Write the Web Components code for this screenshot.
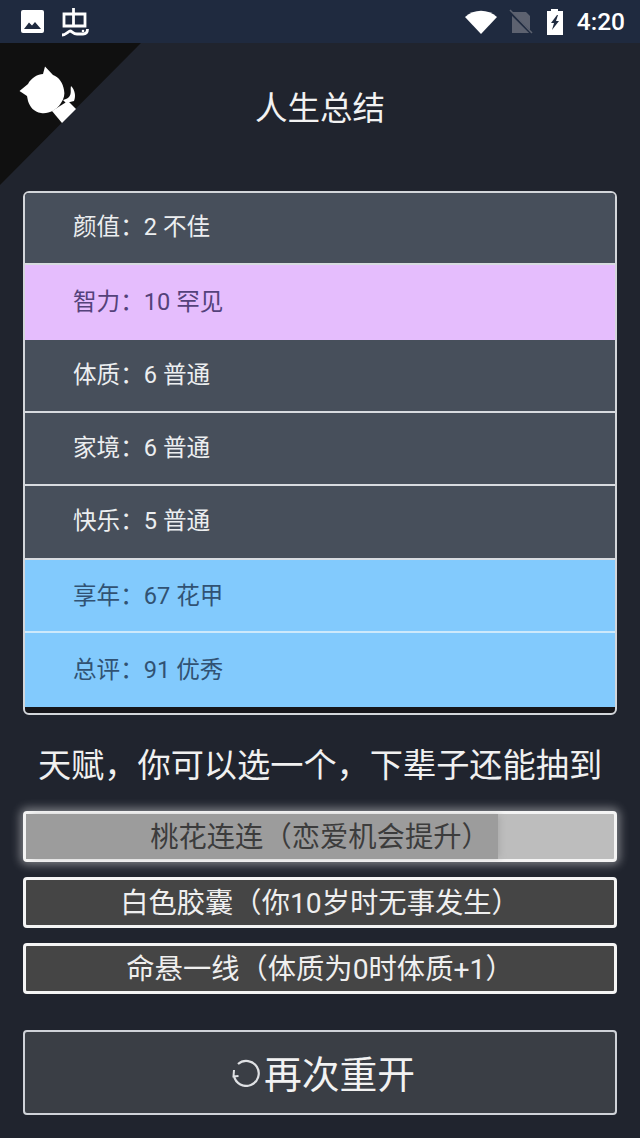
<!DOCTYPE html>
<html lang="zh"><head><meta charset="utf-8"><style>
html,body{margin:0;padding:0;background:#20242e}
body{width:640px;height:1138px;overflow:hidden;font-family:Roboto,"Noto Sans CJK SC",sans-serif}
</style></head><body>
<lk-app>
  <lk-status></lk-status>
  <lk-title>人生总结</lk-title>
  <lk-summary>
    <lk-row>颜值：2 不佳</lk-row>
    <lk-row tone="purple">智力：10 罕见</lk-row>
    <lk-row>体质：6 普通</lk-row>
    <lk-row>家境：6 普通</lk-row>
    <lk-row>快乐：5 普通</lk-row>
    <lk-row tone="blue">享年：67 花甲</lk-row>
    <lk-row tone="blue" last>总评：91 优秀</lk-row>
  </lk-summary>
  <lk-heading>天赋，你可以选一个，下辈子还能抽到</lk-heading>
  <lk-talents>
    <lk-talent selected>桃花连连（恋爱机会提升）</lk-talent>
    <lk-talent>白色胶囊（你10岁时无事发生）</lk-talent>
    <lk-talent>命悬一线（体质为0时体质+1）</lk-talent>
  </lk-talents>
  <lk-restart>再次重开</lk-restart>
</lk-app>
<script>
function def(name,html){
  customElements.define(name,class extends HTMLElement{
    constructor(){super();this.attachShadow({mode:'open'}).innerHTML=html;}
  });
}
def('lk-app',`<style>
:host{display:flex;flex-direction:column;position:relative;width:640px;height:1138px;background:#20242e;overflow:hidden;color:#fff}
.corner{position:absolute;left:0;top:43px;width:141px;height:142px}
</style>
<svg class="corner" viewBox="0 0 141 142"><polygon points="0,0 141,0 0,142" fill="#101010"/>
<g fill="#fff"><path d="M45 23.500 L53 32 C59 34 63 40 64 47 C65 51 64 56 61 60 C56 68 48 71 41 70 C34 69 30 64 28 58 L27 53 L19.500 48 L28 41 C31 35 38 31 43 31 Z"/>
<path d="M52 68 L68 58 L76 66 L62 80 Z"/>
<path d="M71 43 C70 47 72 50 69 54 C67 56 65 56 63 57 L66 60 L74 58 C76 53 75 47 71 43 Z"/></g></svg>
<slot></slot>`);
def('lk-status',`<style>
:host{display:flex;align-items:center;height:43px;background:#1f2a3f;padding:0 15px 0 21px;box-sizing:border-box;flex:none}
svg{display:block;flex:none}
.sp{flex:1}
.t{font:500 24.500px/43px Roboto,sans-serif;color:#fff;margin-left:13px}
</style>
<svg width="23" height="23" viewBox="0 0 23 23" style="margin-top:-1px"><rect x="0" y="0" width="23" height="23" rx="2" fill="#fff"/><path d="M3 19 L8 12.500 L11 15.500 L14 12 L20 19 Z" fill="#1f2a3f"/></svg>
<svg width="30" height="30" viewBox="0 0 30 30" style="margin-left:17px;margin-top:1px" fill="none" stroke="#fff" stroke-width="2.800"><path d="M12.500 1 V20"/><path d="M3 7 H24 V19 H3 Z"/><path d="M1 28 C4.500 28 7 24.500 9 24 C11 24 12 27 16 27 L22 27 C25 27 26.500 25 26.500 22"/><circle cx="22" cy="24" r="1.300" fill="#fff" stroke="none"/></svg>
<span class="sp"></span>
<svg width="32" height="24" viewBox="0 0 32 24"><path d="M0 7 C9 -1.500 23 -1.500 32 7 L16 24 Z" fill="#fff"/></svg>
<svg width="24" height="26" viewBox="0 0 24 26" style="margin-left:12px"><path d="M3 3 H17 L21 7 V24 H3 Z" fill="#5d6270"/><path d="M1 3 L23 25" stroke="#1f2a3f" stroke-width="2.500"/><path d="M1 1 L23 24" stroke="#5d6270" stroke-width="1.500"/></svg>
<svg width="18" height="26" viewBox="0 0 18 26" style="margin-left:13px"><path fill-rule="evenodd" fill="#fff" d="M5 0 H12 V2 H17 V26 H1 V2 H5 Z M11 6 L5 14 H8 L6 21 L13 12 H10 L12 6 Z"/></svg>
<span class="t">4:20</span>`);
def('lk-title',`<style>
:host{display:block;height:148px;box-sizing:border-box;padding-top:44px;text-align:center;font-size:32.500px;line-height:44px;color:#f2f2f2;flex:none}
</style><slot></slot>`);
def('lk-summary',`<style>
:host{display:flex;flex-direction:column;margin:0 23px;height:524px;box-sizing:border-box;border:2px solid #d3d6da;border-radius:6px;background:#16161a;overflow:hidden;flex:none}
</style><slot></slot>`);
def('lk-row',`<style>
:host{display:flex;align-items:center;height:73px;box-sizing:border-box;padding-left:48px;padding-bottom:6px;font-size:23.600px;color:#eceef0;background:#474f5b;border-bottom:2px solid #d8dbe0;flex:none}
:host(:first-child){height:72px}
:host([tone=purple]){background:#e5bdfd;color:#54427a;border-bottom:0;height:75px}
:host([tone=blue]){background:#82cafd;color:#315273;border-bottom-color:#cde9fb;padding-bottom:4px}
:host(:nth-child(5)){height:74px}
:host([last]){border-bottom:0;height:74px}
</style><slot></slot>`);
def('lk-heading',`<style>
:host{display:block;height:96px;box-sizing:border-box;padding-top:28px;line-height:46px;text-align:center;font-size:33.200px;color:#f0f0f0;flex:none;white-space:nowrap}
</style><slot></slot>`);
def('lk-talents',`<style>
:host{display:flex;flex-direction:column;gap:15px;margin:0 23px;flex:none}
</style><slot></slot>`);
def('lk-talent',`<style>
:host{display:flex;align-items:center;justify-content:center;position:relative;height:51px;box-sizing:border-box;padding-bottom:4px;border:3px solid #f4f4f4;border-radius:4px;background:#454545;color:#efefef;font-size:28.300px;white-space:nowrap;overflow:hidden;flex:none}
:host([selected]){background:#bdbdbd;color:#3c3c3c;overflow:visible;box-shadow:0 0 10px 3px rgba(255,255,255,.4)}
.fill{display:none;position:absolute;left:0;top:0;bottom:0;width:472px;background:#9c9c9c;box-shadow:4px 0 6px -2px #aaa}
:host([selected]) .fill{display:block}
.l{position:relative}
</style><div class="fill"></div><span class="l"><slot></slot></span>`);
def('lk-restart',`<style>
:host{display:flex;align-items:center;justify-content:center;gap:3px;margin:36px 23px 0;height:85px;box-sizing:border-box;padding:0 0 2px 6px;border:2px solid #cfd2d8;border-radius:4px;background:#3a3e45;color:#f2f2f2;font-size:37.800px;flex:none}
svg{flex:none}
</style><svg width="30" height="30" viewBox="0 0 30 30" fill="none" stroke="#dfe1e4" stroke-width="2.200"><path d="M7 7 A12.500 12.500 0 1 1 3 19"/><path d="M3 13 L2.500 19.500 L7.500 19" stroke-width="2"/></svg><slot></slot>`);
</script></body></html>
